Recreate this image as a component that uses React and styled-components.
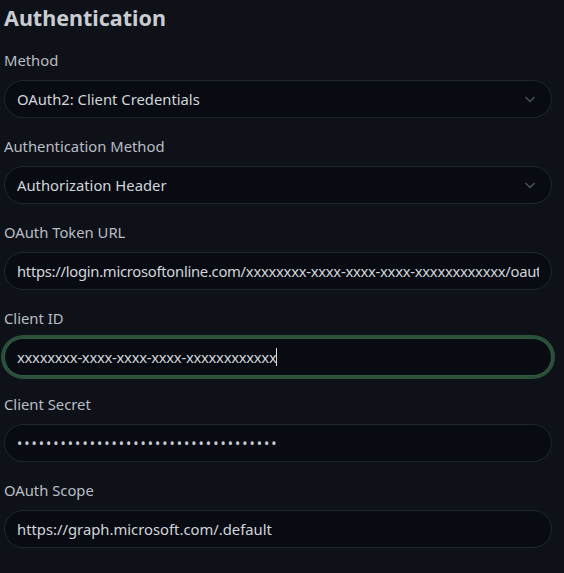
import React from 'react'
import styled, { createGlobalStyle, css } from 'styled-components'

const GlobalStyle = createGlobalStyle`
  html, body {
    margin: 0;
    padding: 0;
    background: #0e1117;
  }
  body {
    font-family: "Noto Sans", "Open Sans", sans-serif;
    color: #c5c9d0;
  }
`

const Panel = styled.div`
  width: 548px;
  padding: 3px 0 20px 4px;
`

const Heading = styled.h2`
  margin: 0 0 16px 0;
  font-size: 21.5px;
  line-height: 30px;
  font-weight: 700;
  color: #c8ccd3;
`

const Field = styled.div`
  display: flex;
  flex-direction: column;
  margin-bottom: 17px;
`

const Label = styled.label`
  font-size: 14.8px;
  line-height: 22px;
  color: #b9bdc5;
  margin-bottom: 9px;
`

const Box = styled.div`
  position: relative;
  display: flex;
  align-items: center;
  height: 38px;
  box-sizing: border-box;
  padding: 0 40px 0 12px;
  border: 1px solid #1f2633;
  border-radius: 19px;
  background: #080b12;
  font-size: 14.8px;
  color: #d2d5da;
  white-space: nowrap;
  overflow: hidden;
  ${(p) => p.$focused && css`
    border-color: #2e5a41;
    box-shadow: 0 0 0 3px #2b5039;
    overflow: visible;
  `}
  ${(p) => p.$wide && css`
    padding-right: 12px;
  `}
`

const Value = styled.span`
  overflow: hidden;
  text-overflow: clip;
  white-space: nowrap;
  letter-spacing: ${(p) => p.$tight ? '-0.28px' : 'normal'};
`

const Caret = styled.span`
  display: inline-block;
  width: 1px;
  height: 18px;
  background: #d8dbe0;
`

const Dots = styled.span`
  letter-spacing: 2px;
  font-size: 14px;
  color: #c9ccd2;
`

const Chevron = styled.svg`
  position: absolute;
  right: 15px;
  top: 50%;
  margin-top: -5px;
`

function Select({ value }) {
  return (
    <Box>
      <Value>{value}</Value>
      <Chevron width="12" height="10" viewBox="0 0 12 10">
        <path d="M1.5 3l4.5 4.5 4.5-4.5" fill="none" stroke="#4b505b" strokeWidth="1.5" />
      </Chevron>
    </Box>
  )
}

export default function App() {
  return (
    <>
      <GlobalStyle />
      <Panel>
        <Heading>Authentication</Heading>
        <Field>
          <Label>Method</Label>
          <Select value="OAuth2: Client Credentials" />
        </Field>
        <Field>
          <Label>Authentication Method</Label>
          <Select value="Authorization Header" />
        </Field>
        <Field>
          <Label>OAuth Token URL</Label>
          <Box $wide>
            <Value $tight>https://login.microsoftonline.com/xxxxxxxx-xxxx-xxxx-xxxx-xxxxxxxxxxxx/oauth2/v2.0/token</Value>
          </Box>
        </Field>
        <Field>
          <Label>Client ID</Label>
          <Box $focused>
            <Value $tight>xxxxxxxx-xxxx-xxxx-xxxx-xxxxxxxxxxxx</Value>
            <Caret />
          </Box>
        </Field>
        <Field>
          <Label>Client Secret</Label>
          <Box>
            <Dots>{'•'.repeat(36)}</Dots>
          </Box>
        </Field>
        <Field>
          <Label>OAuth Scope</Label>
          <Box>
            <Value>https://graph.microsoft.com/.default</Value>
          </Box>
        </Field>
      </Panel>
    </>
  )
}
